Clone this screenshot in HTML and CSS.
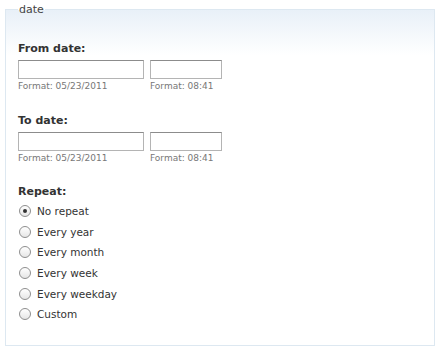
FILE: index.html
```html
<!DOCTYPE html>
<html>
<head>
    <link rel="stylesheet" href="styles.css">
</head>
<body>

<fieldset class="date-box">
    <legend>date</legend>

    <div class="field">
        <label class="field-label">From date:</label>
        <div class="field-row">
            <div class="part part-date">
                <input type="text" class="text-input">
                <div class="description">Format: 05/23/2011</div>
            </div>
            <div class="part part-time">
                <input type="text" class="text-input">
                <div class="description">Format: 08:41</div>
            </div>
        </div>
    </div>

    <div class="field">
        <label class="field-label">To date:</label>
        <div class="field-row">
            <div class="part part-date">
                <input type="text" class="text-input">
                <div class="description">Format: 05/23/2011</div>
            </div>
            <div class="part part-time">
                <input type="text" class="text-input">
                <div class="description">Format: 08:41</div>
            </div>
        </div>
    </div>

    <div class="field">
        <label class="field-label repeat-label">Repeat:</label>
        <ul class="radios">
            <li class="radio-item"><span class="radio checked"></span>No repeat</li>
            <li class="radio-item"><span class="radio"></span>Every year</li>
            <li class="radio-item"><span class="radio"></span>Every month</li>
            <li class="radio-item"><span class="radio"></span>Every week</li>
            <li class="radio-item"><span class="radio"></span>Every weekday</li>
            <li class="radio-item"><span class="radio"></span>Custom</li>
        </ul>
    </div>
</fieldset>

</body>
</html>
```

FILE: styles.css
```css
body {
    margin: 0;
    background: #fff;
    font-family: "DejaVu Sans", Verdana, sans-serif;
    color: #333;
}

.date-box {
    margin: 3px 5px 0 5px;
    padding: 26px 12px 0 12px;
    height: 315px;
    border: 1px solid #dde8f1;
    background: linear-gradient(to bottom, #e8f0f8 0px, #ffffff 45px);
}

.date-box legend {
    padding: 0 1px;
    font-size: 11px;
    line-height: 13px;
    color: #444;
}

.field {
    margin-bottom: 21px;
}

.field-label {
    display: block;
    font-size: 11px;
    font-weight: bold;
    line-height: 14px;
    color: #333;
    margin-bottom: 4px;
}

.repeat-label {
    margin-bottom: 2px;
}

.field-row {
    display: flex;
    gap: 6px;
}

.text-input {
    display: block;
    box-sizing: border-box;
    height: 19px;
    margin: 0;
    padding: 2px;
    border: 1px solid #b4b4b4;
    border-top-color: #8c8c8c;
    background: #fff;
}

.part-date .text-input {
    width: 126px;
}

.part-time .text-input {
    width: 72px;
}

.description {
    font-size: 9px;
    line-height: 12.5px;
    color: #777;
    margin-top: 1px;
}

.radios {
    list-style: none;
    margin: 0;
    padding: 0;
}

.radio-item {
    display: flex;
    align-items: center;
    height: 20.6px;
    font-size: 10.5px;
    color: #333;
}

.radio {
    display: inline-block;
    box-sizing: border-box;
    width: 12px;
    height: 12px;
    margin: 0 6px 0 1px;
    border: 1px solid #8e8e8e;
    border-radius: 50%;
    background: linear-gradient(to bottom, #ffffff, #e6e6e6);
    position: relative;
}

.radio.checked::after {
    content: "";
    position: absolute;
    left: 3px;
    top: 3px;
    width: 4px;
    height: 4px;
    border-radius: 50%;
    background: #333;
}
```
